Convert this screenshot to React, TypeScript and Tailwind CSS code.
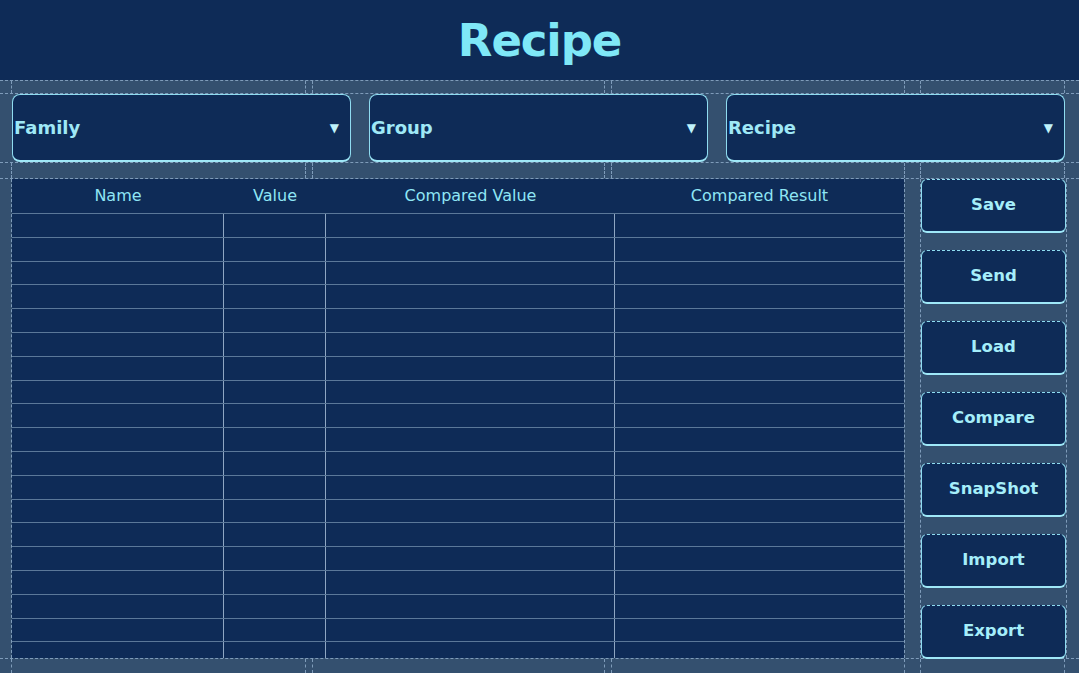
import React from 'react';

const font = { fontFamily: '"DejaVu Sans", Verdana, sans-serif' };

const selects = ['Family', 'Group', 'Recipe'];
const actions = ['Save', 'Send', 'Load', 'Compare', 'SnapShot', 'Import', 'Export'];
const columns = [
  { label: 'Name', w: 'w-[212px]' },
  { label: 'Value', w: 'w-[102px]' },
  { label: 'Compared Value', w: 'w-[289px]' },
  { label: 'Compared Result', w: 'flex-1' },
];
const rows = Array.from({ length: 19 });

// dashed layout guides between the rows
function GuideStrip({ h }: { h: string }) {
  return (
    <div className={`flex ${h}`}>
      <div className="w-[12px] border-r border-dashed border-[#7f9cba]" />
      <div className="w-[293px]" />
      <div className="w-[8px] border-x border-dashed border-[#7f9cba]" />
      <div className="w-[291px]" />
      <div className="w-[8px] border-x border-dashed border-[#7f9cba]" />
      <div className="w-[292px]" />
      <div className="w-[17px] border-x border-dashed border-[#7f9cba]" />
      <div className="w-[144px] border-r border-dashed border-[#7f9cba]" />
    </div>
  );
}

export default function App() {
  return (
    <div className="w-[1079px] h-[673px] overflow-hidden flex flex-col bg-[#34506f]" style={font}>
      {/* Title bar */}
      <div className="h-[80px] shrink-0 bg-[#0e2b57] flex items-center justify-center">
        <h1 className="text-[45px] font-bold text-[#7fe8f7] leading-none tracking-tight">Recipe</h1>
      </div>

      <div className="flex-1 flex flex-col border-t border-dashed border-[#7f9cba]">
        <GuideStrip h="h-[12px]" />

        {/* Select row */}
        <div className="border-y border-dashed border-[#7f9cba] pl-[12px] pr-[14px] grid grid-cols-3 gap-[18px]">
          {selects.map(s => (
            <div
              key={s}
              className="h-[68px] rounded-lg bg-[#0e2b57] border border-[#8fdcf0] border-b-2 border-b-[#9fe8f8] flex items-center justify-between pr-[11px]"
            >
              <span className="text-[18px] font-bold text-[#9fe8f6] pl-[1px]">{s}</span>
              <span className="text-[12px] text-[#bff2fb]">▼</span>
            </div>
          ))}
        </div>

        <GuideStrip h="h-[15px]" />

        {/* Table + actions */}
        <div className="h-[481px] shrink-0 flex border-y border-dashed border-[#7f9cba]">
          <div className="w-[12px] border-r border-dashed border-[#7f9cba]" />
          <div className="w-[892px] bg-[#0e2b57] flex flex-col overflow-hidden">
            <div className="h-[34px] shrink-0 flex items-center text-[16px] text-[#8fe6f5]">
              {columns.map(c => (
                <div key={c.label} className={`${c.w} text-center`}>{c.label}</div>
              ))}
            </div>
            {rows.map((_, i) => (
              <div key={i} className="h-[23.8px] shrink-0 flex border-t border-[#5b7899]">
                {columns.map((c, j) => (
                  <div
                    key={c.label}
                    className={`${c.w} ${j < 3 ? 'border-r border-[#8ea6c2]' : ''}`}
                  />
                ))}
              </div>
            ))}
          </div>
          <div className="w-[17px] border-x border-dashed border-[#7f9cba]" />
          <div className="w-[145px] flex flex-col gap-[17px] pt-[0px]">
            {actions.map(a => (
              <button
                key={a}
                className="h-[54px] shrink-0 rounded-md bg-[#0e2b57] border border-solid [border-top-style:dashed] border-[#8fdcf0] border-b-2 border-b-[#9fe8f8] text-[16.5px] font-bold text-[#a5eefa]"
              >
                {a}
              </button>
            ))}
          </div>
          <div className="flex-1 border-l border-dashed border-[#7f9cba]" />
        </div>

        <GuideStrip h="flex-1" />
      </div>
    </div>
  );
}
